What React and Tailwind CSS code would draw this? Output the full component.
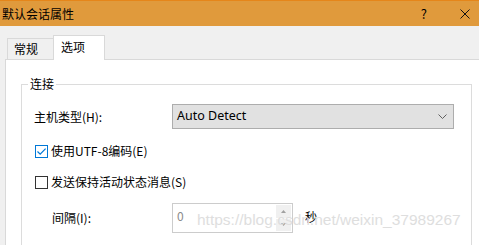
import React from 'react';

function Checkbox({ checked }) {
  return (
    <span
      className={`flex h-[13px] w-[13px] shrink-0 items-center justify-center border bg-white ${
        checked ? 'border-[#0078d7]' : 'border-[#333333]'
      }`}
    >
      {checked && (
        <svg width="11" height="11" viewBox="0 0 11 11">
          <path d="M1.5 5.5 L4.2 8.2 L9.6 2.6" fill="none" stroke="#0078d7" strokeWidth="1.2" />
        </svg>
      )}
    </span>
  );
}

export default function App() {
  return (
    <div className="relative h-[245px] w-[479px] overflow-hidden bg-[#f0f0f0] font-['Noto_Sans_CJK_SC',sans-serif] text-[12px] text-black">
      {/* title bar */}
      <div className="flex h-[26px] items-center justify-between border-t border-[#e5861a] bg-[#e09a3c] pl-[2px]">
        <span className="leading-none">默认会话属性</span>
        <div className="flex items-center">
          <span className="mr-[33px] text-[13px] leading-none">?</span>
          <svg width="10" height="10" viewBox="0 0 10 10" className="mr-[9px]">
            <path d="M0.5 0.5 L9.5 9.5 M9.5 0.5 L0.5 9.5" stroke="#111" strokeWidth="1" />
          </svg>
        </div>
      </div>

      {/* tabs */}
      <div className="flex items-end pl-[7px] pt-[9px]">
        <div className="flex h-[21px] w-[46px] items-center border border-b-0 border-r-0 border-[#d9d9d9] pl-[6px]">
          常规
        </div>
        <div className="relative z-10 -mb-px flex h-[25px] w-[52px] items-center border border-b-0 border-[#d9d9d9] bg-white pb-[3px] pl-[7px]">
          选项
        </div>
      </div>

      {/* panel */}
      <div className="ml-[5px] h-[200px] border-l border-t border-[#d9d9d9] bg-white pl-[15px] pt-[24px]">
        <div className="relative h-[200px] w-[451px] border border-[#dcdcdc] pl-[12px] pt-[19px]">
          <span className="absolute -top-[9px] left-[6px] bg-white px-[2px] leading-[16px]">连接</span>

          <div className="flex items-center">
            <span className="w-[138px]">主机类型(H):</span>
            <div className="flex h-[25px] w-[282px] items-center justify-between border border-[#adadad] bg-[#e1e1e1] pl-[4px] pr-[6px] font-['Noto_Sans',sans-serif] text-[12.5px]">
              <span>Auto Detect</span>
              <svg width="9" height="5" viewBox="0 0 9 5">
                <path d="M0.5 0.5 L4.5 4.5 L8.5 0.5" fill="none" stroke="#606060" strokeWidth="1" />
              </svg>
            </div>
          </div>

          <div className="mt-[14px] flex h-[16px] items-center gap-[3px] pl-[1px]">
            <Checkbox checked />
            <span>使用UTF-8编码(E)</span>
          </div>

          <div className="mt-[15px] flex h-[16px] items-center gap-[3px] pl-[1px]">
            <Checkbox />
            <span>发送保持活动状态消息(S)</span>
          </div>

          <div className="mt-[13px] flex items-center">
            <span className="w-[138px] pl-[18px]">间隔(I):</span>
            <div className="flex h-[30px] w-[121px] border border-[#cccccc] bg-white">
              <span className="flex-1 pl-[4px] pt-[3px] text-[#8a8a8a]">0</span>
              <div className="flex w-[17px] flex-col gap-[1px] p-[1px]">
                <div className="flex flex-1 items-center justify-center bg-[#f0f0f0]">
                  <svg width="5" height="3" viewBox="0 0 5 3">
                    <path d="M0 3 L2.5 0 L5 3 Z" fill="#a0a0a0" />
                  </svg>
                </div>
                <div className="flex flex-1 items-center justify-center bg-[#f0f0f0]">
                  <svg width="5" height="3" viewBox="0 0 5 3">
                    <path d="M0 0 L2.5 3 L5 0 Z" fill="#a0a0a0" />
                  </svg>
                </div>
              </div>
            </div>
            <span className="ml-[12px] pb-[3px]">秒</span>
          </div>
        </div>
      </div>

      {/* watermark */}
      <span className="absolute left-[197px] top-[212px] font-['Liberation_Sans',sans-serif] text-[15.5px] leading-none text-[#dedede]">
        https://blog.csdn.net/weixin_37989267
      </span>
    </div>
  );
}
